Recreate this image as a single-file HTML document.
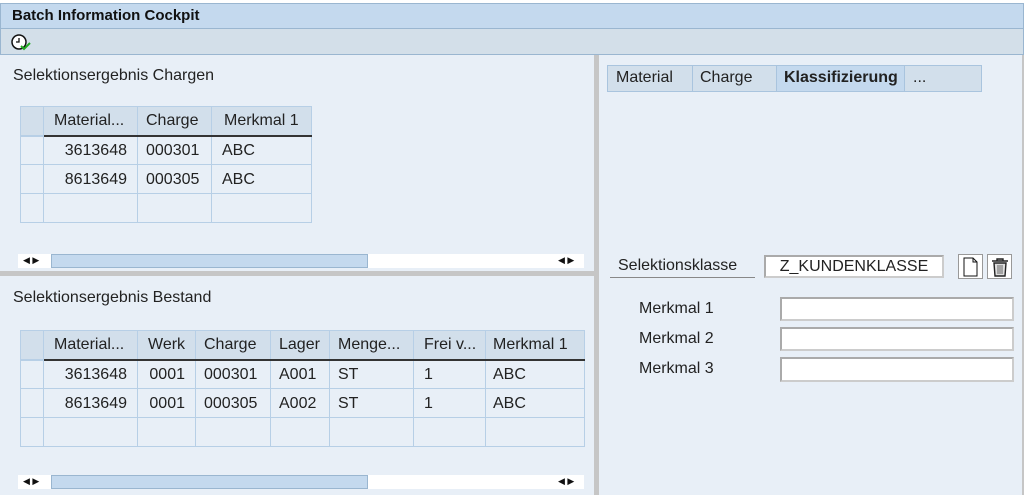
<!DOCTYPE html><html><head><style>
*{box-sizing:border-box;margin:0;padding:0}
body{width:1024px;height:495px;background:#fff;font-family:"Liberation Sans",sans-serif;position:relative;overflow:hidden;color:#222}
.a{position:absolute}
.t{position:absolute;font-size:16px}
table{border-collapse:collapse;position:absolute;font-size:16px;background:#e8eff7;table-layout:fixed}
td{border:1px solid #b7cfe6;height:29px;padding:1px 10px 0 10px;white-space:nowrap;overflow:hidden}
thead td{background:#d2dfeb}
thead tr td{border-bottom:2px solid #333}
thead td:first-child,tbody td:first-child{border-bottom-color:#b7cfe6}
.r{text-align:right}
.arr{font-size:9px;color:#111}
.inp{position:absolute;background:#fff;border:2px solid #aaa;border-right-color:#ccc;border-bottom-color:#ccc}
</style></head><body>
<div class="a" style="left:0;top:3px;width:1024px;height:26px;background:#c4d9ee;border:1px solid #9ab6d0"></div>
<div class="t" style="left:12px;top:7px;font-weight:bold;font-size:15px;color:#111">Batch Information Cockpit</div>
<div class="a" style="left:0;top:29px;width:1024px;height:26px;background:#d3dfe9;border:1px solid #9ab6d0;border-top:none"></div>
<svg class="a" style="left:9px;top:33px" width="24" height="20"><circle cx="10" cy="9" r="7" fill="#fff" stroke="#111" stroke-width="1.5"/><path d="M10 5v4H7" stroke="#111" fill="none" stroke-width="1.3"/><path d="M12 13l3 3 6-6" stroke="#2a2" stroke-width="2" fill="none"/></svg>
<div class="a" style="left:0;top:55px;width:594px;height:216px;background:#e8eff7"></div>
<div class="a" style="left:0;top:276px;width:594px;height:219px;background:#e8eff7"></div>
<div class="a" style="left:0;top:271px;width:594px;height:5px;background:#c6c6c6"></div>
<div class="a" style="left:594px;top:55px;width:5px;height:440px;background:#c6c6c6"></div>
<div class="a" style="left:599px;top:55px;width:425px;height:440px;background:#e8eff7;border-right:2px solid #c6c6c6"></div>
<div class="t" style="left:13px;top:67px">Selektionsergebnis Chargen</div>
<table style="left:20px;top:106px;width:291px"><thead><tr><td style="width:23px"></td><td style="width:94px">Material...</td><td style="width:74px;padding-left:8px">Charge</td><td style="width:100px;padding-left:12px">Merkmal 1</td></tr></thead>
<tbody><tr><td></td><td class="r">3613648</td><td style="padding-left:8px">000301</td><td>ABC</td></tr><tr><td></td><td class="r">8613649</td><td style="padding-left:8px">000305</td><td>ABC</td></tr><tr><td></td><td></td><td></td><td></td></tr></tbody></table>
<div class="a" style="left:18px;top:254px;width:566px;height:14px;background:#fff"></div>
<div class="a arr" style="left:23px;top:255px">◀ ▶</div>
<div class="a" style="left:51px;top:254px;width:317px;height:14px;background:#c4d9ee;border:1px solid #9ab6d0"></div>
<div class="a arr" style="left:558px;top:255px">◀ ▶</div>
<div class="t" style="left:13px;top:289px">Selektionsergebnis Bestand</div>
<table style="left:20px;top:330px;width:564px"><thead><tr><td style="width:23px"></td><td style="width:94px">Material...</td><td style="width:58px" class="r">Werk</td><td style="width:75px;padding-left:8px">Charge</td><td style="width:59px;padding-left:8px">Lager</td><td style="width:84px;padding-left:8px">Menge...</td><td style="width:72px">Frei v...</td><td style="width:99px;padding-left:7px">Merkmal 1</td></tr></thead>
<tbody><tr><td></td><td class="r">3613648</td><td class="r">0001</td><td style="padding-left:8px">000301</td><td style="padding-left:8px">A001</td><td style="padding-left:8px">ST</td><td>1</td><td style="padding-left:7px">ABC</td></tr><tr><td></td><td class="r">8613649</td><td class="r">0001</td><td style="padding-left:8px">000305</td><td style="padding-left:8px">A002</td><td style="padding-left:8px">ST</td><td>1</td><td style="padding-left:7px">ABC</td></tr><tr><td></td><td></td><td></td><td></td><td></td><td></td><td></td><td></td></tr></tbody></table>
<div class="a" style="left:18px;top:475px;width:566px;height:14px;background:#fff"></div>
<div class="a arr" style="left:23px;top:476px">◀ ▶</div>
<div class="a" style="left:51px;top:475px;width:317px;height:14px;background:#c4d9ee;border:1px solid #9ab6d0"></div>
<div class="a arr" style="left:558px;top:476px">◀ ▶</div>
<div class="a" style="left:607px;top:65px;width:375px;height:27px;background:#d2dfeb;border:1px solid #a9c4de"></div>
<div class="a" style="left:776px;top:66px;width:129px;height:25px;background:#c4d9ee;border-left:1px solid #a9c4de;border-right:1px solid #a9c4de"></div>
<div class="a" style="left:692px;top:66px;width:1px;height:25px;background:#a9c4de"></div>
<div class="t" style="left:616px;top:69px">Material</div>
<div class="t" style="left:700px;top:69px">Charge</div>
<div class="t" style="left:784px;top:69px;font-weight:bold">Klassifizierung</div>
<div class="t" style="left:913px;top:69px">...</div>
<div class="t" style="left:618px;top:257px">Selektionsklasse</div>
<div class="a" style="left:610px;top:277px;width:145px;height:1px;background:#888"></div>
<div class="inp" style="left:764px;top:255px;width:180px;height:23px;text-align:center;font-size:16px;line-height:19px">Z_KUNDENKLASSE</div>
<svg class="a" style="left:958px;top:254px" width="56" height="26"><rect x="0.5" y="0.5" width="24" height="24" fill="#fff" stroke="#999"/><path d="M6 4h9l4 4v14H6z M15 4v4h4" fill="#fff" stroke="#111"/><rect x="29.5" y="0.5" width="24" height="24" fill="#fff" stroke="#999"/><path d="M34 7h16M39 7V5h6v2M36 9h12l-1 13H37z" fill="#ddd" stroke="#222" stroke-width="1.4"/><path d="M40 11v9M42 11v9M44 11v9" stroke="#666"/></svg>
<div class="t" style="left:639px;top:300px">Merkmal 1</div>
<div class="t" style="left:639px;top:330px">Merkmal 2</div>
<div class="t" style="left:639px;top:360px">Merkmal 3</div>
<div class="inp" style="left:780px;top:297px;width:234px;height:24px"></div>
<div class="inp" style="left:780px;top:327px;width:234px;height:24px"></div>
<div class="inp" style="left:780px;top:357px;width:234px;height:25px"></div>
</body></html>
